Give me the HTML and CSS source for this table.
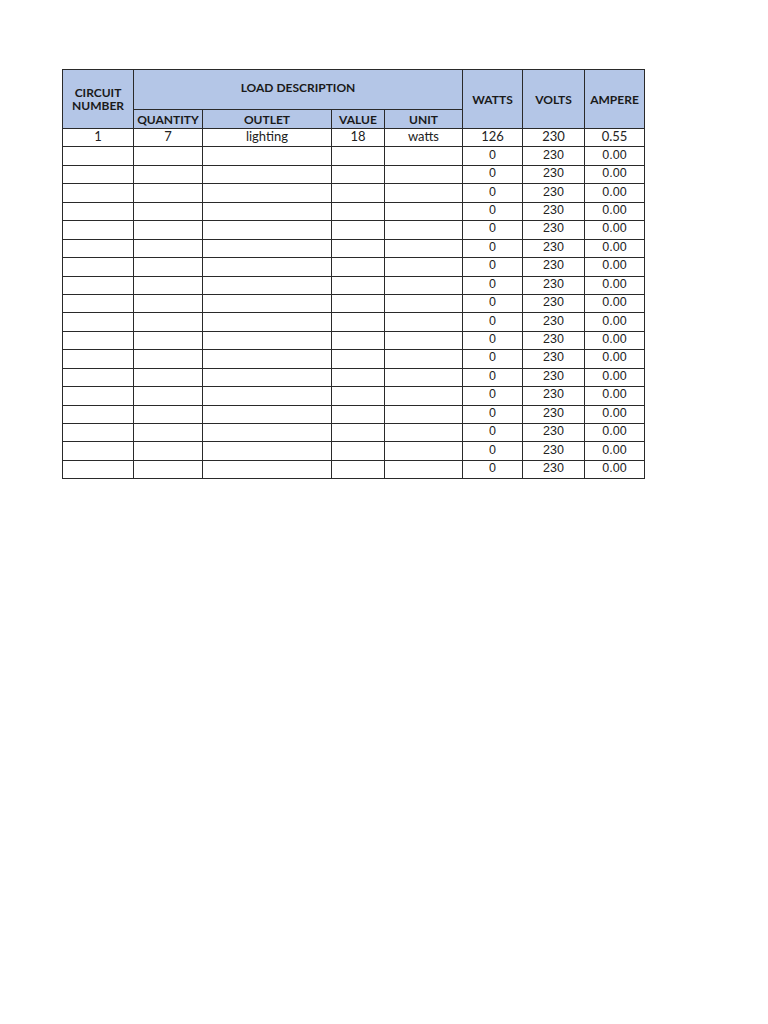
FILE: index.html
```html
<!DOCTYPE html>
<html>
<head>
<meta charset="utf-8">
<link rel="stylesheet" href="styles.css">
</head>
<body>
<div class="page">
<table class="load">
<colgroup>
<col class="c1"><col class="c2"><col class="c3"><col class="c4"><col class="c5"><col class="c6"><col class="c7"><col class="c8">
</colgroup>
<thead>
<tr class="h1">
<th rowspan="2">CIRCUIT<br>NUMBER</th>
<th colspan="4" class="top">LOAD DESCRIPTION</th>
<th rowspan="2">WATTS</th>
<th rowspan="2">VOLTS</th>
<th rowspan="2">AMPERE</th>
</tr>
<tr class="h2">
<th>QUANTITY</th><th>OUTLET</th><th>VALUE</th><th>UNIT</th>
</tr>
</thead>
<tbody>
<tr class="first"><td>1</td><td>7</td><td>lighting</td><td>18</td><td>watts</td><td>126</td><td>230</td><td>0.55</td></tr>
<tr><td></td><td></td><td></td><td></td><td></td><td>0</td><td>230</td><td>0.00</td></tr>
<tr><td></td><td></td><td></td><td></td><td></td><td>0</td><td>230</td><td>0.00</td></tr>
<tr><td></td><td></td><td></td><td></td><td></td><td>0</td><td>230</td><td>0.00</td></tr>
<tr><td></td><td></td><td></td><td></td><td></td><td>0</td><td>230</td><td>0.00</td></tr>
<tr><td></td><td></td><td></td><td></td><td></td><td>0</td><td>230</td><td>0.00</td></tr>
<tr><td></td><td></td><td></td><td></td><td></td><td>0</td><td>230</td><td>0.00</td></tr>
<tr><td></td><td></td><td></td><td></td><td></td><td>0</td><td>230</td><td>0.00</td></tr>
<tr><td></td><td></td><td></td><td></td><td></td><td>0</td><td>230</td><td>0.00</td></tr>
<tr><td></td><td></td><td></td><td></td><td></td><td>0</td><td>230</td><td>0.00</td></tr>
<tr><td></td><td></td><td></td><td></td><td></td><td>0</td><td>230</td><td>0.00</td></tr>
<tr><td></td><td></td><td></td><td></td><td></td><td>0</td><td>230</td><td>0.00</td></tr>
<tr><td></td><td></td><td></td><td></td><td></td><td>0</td><td>230</td><td>0.00</td></tr>
<tr><td></td><td></td><td></td><td></td><td></td><td>0</td><td>230</td><td>0.00</td></tr>
<tr><td></td><td></td><td></td><td></td><td></td><td>0</td><td>230</td><td>0.00</td></tr>
<tr><td></td><td></td><td></td><td></td><td></td><td>0</td><td>230</td><td>0.00</td></tr>
<tr><td></td><td></td><td></td><td></td><td></td><td>0</td><td>230</td><td>0.00</td></tr>
<tr><td></td><td></td><td></td><td></td><td></td><td>0</td><td>230</td><td>0.00</td></tr>
<tr><td></td><td></td><td></td><td></td><td></td><td>0</td><td>230</td><td>0.00</td></tr>
</tbody>
</table>
</div>
</body>
</html>
```

FILE: styles.css
```css
html, body {
  margin: 0;
  padding: 0;
  background: #ffffff;
}
.page {
  padding: 69px 0 0 62px;
}
.load {
  border-collapse: collapse;
  table-layout: fixed;
  width: 582px;
  font-family: "Liberation Sans", Arial, sans-serif;
  font-size: 12.5px;
  color: #222;
}
.c1 { width: 71px; }
.c2 { width: 69px; }
.c3 { width: 129px; }
.c4 { width: 53px; }
.c5 { width: 78px; }
.c6 { width: 60px; }
.c7 { width: 62px; }
.c8 { width: 60px; }
.load th, .load td {
  border: 1px solid #2a2a2a;
  padding: 0;
  text-align: center;
  vertical-align: middle;
  line-height: 13px;
}
.load th {
  background: #b4c6e7;
  font-family: Lato, "Liberation Sans", sans-serif;
  font-weight: bold;
  font-size: 12px;
  color: #1a1a1a;
}
.h1 { height: 40px; }
.h1 .top { vertical-align: top; padding-top: 11px; }
.h2 { height: 19px; }
.load tbody tr { height: 18.45px; }
.load tbody td { padding-bottom: 2px; }
.first td {
  font-family: Lato, "Liberation Sans", sans-serif;
  font-size: 13px;
}
```
